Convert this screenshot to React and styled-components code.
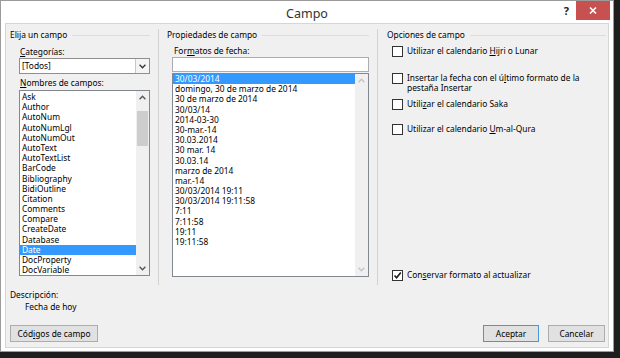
import React from "react"
import styled, { createGlobalStyle } from "styled-components"

const GlobalStyle = createGlobalStyle`
  html, body {
    margin: 0;
    padding: 0;
    background: #fff;
  }
  body {
    font-family: "Noto Sans", "Liberation Sans", sans-serif;
  }
`

const Page = styled.div`
  width: 620px;
  height: 358px;
  overflow: hidden;
`

const Window = styled.div`
  width: 614px;
  height: 352px;
  box-sizing: border-box;
  border: 1px solid #9b9b9b;
  background: #fff;
  display: flex;
  flex-direction: column;
  box-shadow: 3px 3px 1px 3px #1e1e1e;
`

const TitleBar = styled.div`
  height: 22px;
  flex: none;
  display: grid;
  grid-template-columns: 1fr auto 1fr;
`

const Title = styled.div`
  grid-column: 2;
  margin-top: 3px;
  line-height: 20px;
  font-size: 12.5px;
  color: #333;
`

const Controls = styled.div`
  grid-column: 3;
  justify-self: end;
  display: flex;
  align-items: flex-start;
  margin-right: 3px;
`

const Help = styled.div`
  line-height: 19px;
  font-size: 11px;
  font-weight: bold;
  color: #222;
  margin-right: 7px;
`

const Close = styled.div`
  width: 34px;
  height: 19px;
  background: #c75050;
  display: flex;
  align-items: center;
  justify-content: center;
`

const Client = styled.div`
  flex: 1;
  margin: 0 4px 3px 4px;
  border: 1px solid #d6d6d6;
  background: #f0f0f0;
  display: flex;
  flex-direction: column;
  font-size: 8.4px;
  color: #000;
`

const Panels = styled.div`
  margin-top: 5px;
  height: 256px;
  display: grid;
  grid-template-columns: 152px 219px 1fr;
`

const Panel = styled.div`
  display: flex;
  flex-direction: column;
  border-left: ${p => (p.$first ? "none" : "1px solid #d2d2d2")};
  padding-right: ${p => p.$right}px;
`

const GroupTitle = styled.div`
  display: flex;
  align-items: center;
  line-height: 12px;
  padding-left: ${p => p.$indent}px;
  white-space: nowrap;

  &::after {
    content: "";
    flex: 1;
    height: 1px;
    margin-left: 5px;
    margin-top: 1px;
    background: #dcdcdc;
  }
`

const Label = styled.div`
  line-height: 12px;
  margin-left: ${p => p.$indent}px;
  margin-top: ${p => p.$top}px;
`

const Combo = styled.div`
  margin-left: 13px;
  width: 131px;
  height: 16px;
  box-sizing: border-box;
  border: 1px solid #8f8f8f;
  background: #fff;
  display: flex;
`

const ComboText = styled.div`
  flex: 1;
  line-height: 14px;
  padding-left: 2px;
`

const ComboButton = styled.div`
  width: 13px;
  border-left: 1px solid #c8c8c8;
  background: #f4f4f4;
  display: flex;
  align-items: center;
  justify-content: center;
`

const TextInput = styled.div`
  margin-left: 13px;
  width: 197px;
  height: 15px;
  box-sizing: border-box;
  border: 1px solid #abadb3;
  background: #fff;
`

const ListBox = styled.div`
  margin-left: 13px;
  margin-top: 1px;
  width: ${p => p.$w}px;
  height: ${p => p.$h}px;
  box-sizing: border-box;
  border: 1px solid #828790;
  background: #fff;
  display: flex;
  overflow: hidden;
`

const Rows = styled.div`
  flex: 1;
  padding-top: ${p => p.$top}px;
`

const Row = styled.div`
  height: 10.2px;
  line-height: 10.2px;
  padding-left: 2px;
  white-space: nowrap;
  background: ${p => (p.$selected ? "#3399ff" : "transparent")};
  color: ${p => (p.$selected ? "#fff" : "inherit")};
`

const ScrollBar = styled.div`
  width: 13px;
  background: #f0f0f0;
  display: flex;
  flex-direction: column;
`

const Arrow = styled.div`
  height: 13px;
  flex: none;
  display: flex;
  align-items: center;
  justify-content: center;
`

const Thumb = styled.div`
  margin: 7px 1px 0 1px;
  height: 35px;
  background: #cdcdcd;
`

const Track = styled.div`
  flex: 1;
`

const CheckRow = styled.div`
  display: flex;
  align-items: flex-start;
  margin-left: 14px;
  margin-top: ${p => (p.$auto ? "auto" : `${p.$top}px`)};
  margin-bottom: ${p => (p.$auto ? "4px" : "0")};
`

const Box = styled.div`
  width: 11px;
  height: 11px;
  box-sizing: border-box;
  border: 1px solid #333;
  background: #fff;
  flex: none;
  display: flex;
  align-items: center;
  justify-content: center;
`

const CheckText = styled.div`
  margin-left: 4px;
  line-height: 10.2px;
`

const Description = styled.div`
  margin-top: ${p => p.$top}px;
  padding-left: ${p => p.$indent}px;
  line-height: 12px;
`

const ButtonRow = styled.div`
  margin-top: auto;
  display: flex;
  align-items: flex-end;
  gap: 9px;
  padding: 0 3px 5px 4px;
`

const Spacer = styled.div`
  flex: 1;
`

const Button = styled.div`
  width: ${p => p.$w}px;
  height: 17px;
  box-sizing: border-box;
  border: 1px solid ${p => (p.$primary ? "#4a96dc" : "#adadad")};
  background: #e1e1e1;
  text-align: center;
  line-height: 15px;
`

const Chevron = ({ up, color = "#555" }) => (
  <svg width="7" height="5" viewBox="0 0 7 5">
    <polyline
      points={up ? "0.6,4.2 3.5,1.2 6.4,4.2" : "0.6,0.8 3.5,3.8 6.4,0.8"}
      fill="none"
      stroke={color}
      strokeWidth="1.3"
    />
  </svg>
)

const fields = [
  "Ask", "Author", "AutoNum", "AutoNumLgl", "AutoNumOut", "AutoText",
  "AutoTextList", "BarCode", "Bibliography", "BidiOutline", "Citation",
  "Comments", "Compare", "CreateDate", "Database", "Date", "DocProperty",
  "DocVariable",
]

const formats = [
  "30/03/2014", "domingo, 30 de marzo de 2014", "30 de marzo de 2014",
  "30/03/14", "2014-03-30", "30-mar.-14", "30.03.2014", "30 mar. 14",
  "30.03.14", "marzo de 2014", "mar.-14", "30/03/2014 19:11",
  "30/03/2014 19:11:58", "7:11", "7:11:58", "19:11", "19:11:58",
]

export default function App() {
  return (
    <Page>
      <GlobalStyle />
      <Window>
        <TitleBar>
          <Title>Campo</Title>
          <Controls>
            <Help>?</Help>
            <Close>
              <svg width="8" height="7" viewBox="0 0 8 7">
                <path d="M1 0.5 L7 6.5 M7 0.5 L1 6.5" stroke="#fff" strokeWidth="1.6" />
              </svg>
            </Close>
          </Controls>
        </TitleBar>
        <Client>
          <Panels>
            <Panel $first $right={8}>
              <GroupTitle $indent={4}>Elija un campo</GroupTitle>
              <Label $indent={14} $top={5}><u>C</u>ategorías:</Label>
              <Combo>
                <ComboText>[Todos]</ComboText>
                <ComboButton><Chevron color="#333" /></ComboButton>
              </Combo>
              <Label $indent={14} $top={3}><u>N</u>ombres de campos:</Label>
              <ListBox $w={131} $h={186}>
                <Rows $top={1}>
                  {fields.map(f => (
                    <Row key={f} $selected={f === "Date"}>{f}</Row>
                  ))}
                </Rows>
                <ScrollBar>
                  <Arrow><Chevron up /></Arrow>
                  <Thumb />
                  <Track />
                  <Arrow><Chevron /></Arrow>
                </ScrollBar>
              </ListBox>
            </Panel>
            <Panel $right={8}>
              <GroupTitle $indent={8}>Propiedades de campo</GroupTitle>
              <Label $indent={15} $top={4}>For<u>m</u>atos de fecha:</Label>
              <TextInput />
              <ListBox $w={197} $h={204}>
                <Rows $top={0}>
                  {formats.map((f, i) => (
                    <Row key={f} $selected={i === 0}>{f}</Row>
                  ))}
                </Rows>
                <ScrollBar>
                  <Arrow><Chevron up color="#c4c4c4" /></Arrow>
                  <Track />
                  <Arrow><Chevron color="#c4c4c4" /></Arrow>
                </ScrollBar>
              </ListBox>
            </Panel>
            <Panel $right={2}>
              <GroupTitle $indent={9}>Opciones de campo</GroupTitle>
              <CheckRow $top={5}>
                <Box />
                <CheckText>Utilizar el calendario <u>H</u>ijri o Lunar</CheckText>
              </CheckRow>
              <CheckRow $top={16}>
                <Box />
                <CheckText>
                  Insertar la fecha con el ú<u>l</u>timo formato de la<br />pestaña Insertar
                </CheckText>
              </CheckRow>
              <CheckRow $top={6}>
                <Box />
                <CheckText>Utili<u>z</u>ar el calendario Saka</CheckText>
              </CheckRow>
              <CheckRow $top={14}>
                <Box />
                <CheckText>Utilizar el calendario <u>U</u>m-al-Qura</CheckText>
              </CheckRow>
              <CheckRow $auto>
                <Box>
                  <svg width="9" height="9" viewBox="0 0 9 9">
                    <path d="M1.5 4.5 L3.6 6.8 L7.8 1.6" fill="none" stroke="#1a1a1a" strokeWidth="1.6" />
                  </svg>
                </Box>
                <CheckText>Con<u>s</u>ervar formato al actualizar</CheckText>
              </CheckRow>
            </Panel>
          </Panels>
          <Description $indent={4} $top={4}>Descripción:</Description>
          <Description $indent={19} $top={0}>Fecha de hoy</Description>
          <ButtonRow>
            <Button $w={88}>Cód<u>i</u>gos de campo</Button>
            <Spacer />
            <Button $w={56} $primary>Aceptar</Button>
            <Button $w={57}>Cancelar</Button>
          </ButtonRow>
        </Client>
      </Window>
    </Page>
  )
}
